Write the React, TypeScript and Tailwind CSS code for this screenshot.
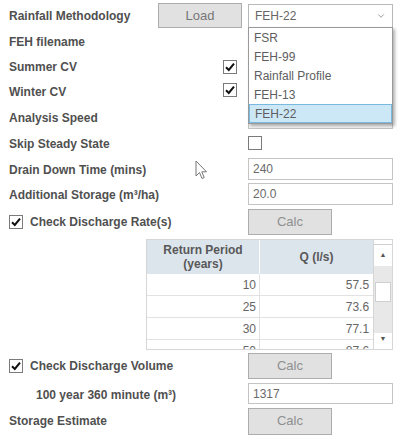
import { ChevronDown } from "lucide-react"

const labelCls = "text-[12px] font-bold text-[#505050] whitespace-nowrap"

function Check({ checked }: { checked?: boolean }) {
  return (
    <div className="w-[14px] h-[14px] border border-[#7a7a7a] bg-white flex items-center justify-center shrink-0">
      {checked && (
        <svg width="12" height="12" viewBox="0 0 12 12">
          <path d="M2 6.2 L4.8 9 L10 2.6" fill="none" stroke="#111" strokeWidth="2" />
        </svg>
      )}
    </div>
  )
}

function Btn({ label, w = "w-[84px]", h = "h-[26px]", tone = "text-[#8f8f8f]" }: { label: string; w?: string; h?: string; tone?: string }) {
  return (
    <div className={`${w} ${h} bg-[#e1e1e1] border border-[#adadad] flex items-center justify-center text-[13px] ${tone}`}>
      {label}
    </div>
  )
}

function Input({ value, h = "h-[22px]" }: { value: string; h?: string }) {
  return (
    <div className={`w-[145px] ${h} border border-[#c4c4c4] bg-white flex items-center pl-[4px] text-[12px] text-[#6a6a6a]`}>
      {value}
    </div>
  )
}

const rows = [
  ["10", "57.5"],
  ["25", "73.6"],
  ["30", "77.1"],
  ["50", "87.6"],
]

export default function App() {
  return (
    <div className="relative w-[399px] h-[446px] bg-white font-['Liberation_Sans',Arial,sans-serif] overflow-hidden">
      <div className="flex flex-col pt-[3px]">
        {/* rainfall methodology */}
        <div className="flex items-center h-[25px]">
          <div className="flex items-center w-[248px] pl-[9px]">
            <span className={labelCls}>Rainfall Methodology</span>
            <div className="ml-auto mr-[6px]">
              <Btn label="Load" h="h-[25px]" tone="text-[#777]" />
            </div>
          </div>
          <div className="w-[145px] h-[24px] border border-[#b8b8b8] bg-white flex items-center pl-[6px] pr-[6px] text-[12px] text-[#666]">
            <span>FEH-22</span>
            <ChevronDown className="ml-auto text-[#888]" size={10} strokeWidth={2} />
          </div>
        </div>

        <div className="flex items-center h-[26px]">
          <div className="w-[248px] pl-[9px]">
            <span className={labelCls}>FEH filename</span>
          </div>
        </div>

        <div className="flex items-center h-[25px]">
          <div className="flex items-center w-[248px] pl-[9px]">
            <span className={labelCls}>Summer CV</span>
            <div className="ml-auto mr-[11px]">
              <Check checked />
            </div>
          </div>
        </div>

        <div className="flex items-center h-[25px]">
          <div className="flex items-center w-[248px] pl-[9px]">
            <span className={labelCls}>Winter CV</span>
            <div className="ml-auto mr-[11px] -mt-[3px]">
              <Check checked />
            </div>
          </div>
        </div>

        <div className="flex items-center h-[26px]">
          <div className="w-[248px] pl-[9px]">
            <span className={labelCls}>Analysis Speed</span>
          </div>
          <div className="w-[145px] h-[24px] border border-[#c4c4c4] bg-[#f4f4f4]" />
        </div>

        <div className="flex items-center h-[26px]">
          <div className="w-[248px] pl-[9px]">
            <span className={labelCls}>Skip Steady State</span>
          </div>
          <Check />
        </div>

        <div className="flex items-center h-[25px]">
          <div className="w-[248px] pl-[9px]">
            <span className={labelCls}>Drain Down Time (mins)</span>
          </div>
          <Input value="240" />
        </div>

        <div className="flex items-center h-[26px]">
          <div className="w-[248px] pl-[9px]">
            <span className={labelCls}>Additional Storage (m³/ha)</span>
          </div>
          <Input value="20.0" />
        </div>

        <div className="flex items-center h-[30px]">
          <div className="flex items-center gap-[7px] w-[248px] pl-[9px]">
            <Check checked />
            <span className={labelCls}>Check Discharge Rate(s)</span>
          </div>
          <Btn label="Calc" />
        </div>

        {/* return period table */}
        <div className="ml-[146px] mt-[2px] w-[247px] h-[111px] flex border border-[#d6d6d6] overflow-hidden">
          <div className="w-[227px] flex flex-col">
            <div className="flex h-[34px] shrink-0 bg-[#dde5ec]">
              <div className="w-[113px] flex items-center justify-center text-center leading-[14px] text-[12px] font-bold text-[#585858] border-r border-white">
                Return Period
                <br />
                (years)
              </div>
              <div className="flex-1 flex items-center justify-center text-[12px] font-bold text-[#585858]">Q (l/s)</div>
            </div>
            {rows.map(([p, q]) => (
              <div key={p} className="flex h-[22px] shrink-0 border-b border-[#e2e2e2] text-[12px] text-[#666]">
                <div className="w-[113px] flex items-center justify-end pr-[3px] border-r border-[#e2e2e2]">{p}</div>
                <div className="flex-1 flex items-center justify-end pr-[4px]">{q}</div>
              </div>
            ))}
          </div>
          <div className="w-[19px] flex flex-col border-l border-[#d6d6d6] bg-white">
            <div className="h-[5px] border-b border-[#cfcfcf]" />
            <div className="h-[21px] flex items-center justify-center text-[7px] text-[#555]">▲</div>
            <div className="flex-1 flex flex-col bg-[#e8e8e8]">
              <div className="h-[16px]" />
              <div className="h-[20px] mx-[1px] bg-white border border-[#cfcfcf]" />
            </div>
            <div className="h-[16px] flex items-start justify-center text-[7px] text-[#555] pt-[1px]">▼</div>
          </div>
        </div>

        <div className="flex items-center h-[28px] mt-[2px]">
          <div className="flex items-center gap-[7px] w-[248px] pl-[9px]">
            <Check checked />
            <span className={labelCls}>Check Discharge Volume</span>
          </div>
          <Btn label="Calc" />
        </div>

        <div className="flex items-center h-[27px]">
          <div className="w-[248px] pl-[36px]">
            <span className={labelCls}>100 year 360 minute (m³)</span>
          </div>
          <Input value="1317" h="h-[21px]" />
        </div>

        <div className="flex items-center h-[28px]">
          <div className="w-[248px] pl-[9px] -mt-[3px]">
            <span className={labelCls}>Storage Estimate</span>
          </div>
          <Btn label="Calc" h="h-[27px]" />
        </div>
      </div>

      {/* open dropdown list */}
      <div className="absolute left-[248px] top-[27px] w-[145px] h-[97px] bg-white border border-[#9a9a9a] shadow-[2px_2px_3px_rgba(0,0,0,0.3)] flex flex-col pt-[1px] text-[12px] text-[#5e5e5e]">
        {["FSR", "FEH-99", "Rainfall Profile", "FEH-13"].map((o) => (
          <div key={o} className="h-[19px] flex items-center pl-[5px]">
            {o}
          </div>
        ))}
        <div className="h-[19px] flex items-center pl-[5px] bg-[#cce7f6] border border-[#78b9df]">FEH-22</div>
      </div>

      {/* mouse pointer */}
      <svg className="absolute left-[195px] top-[160px]" width="13" height="20" viewBox="0 0 13 20">
        <path d="M1 1 L1 16 L4.5 12.5 L7 18.5 L9.2 17.5 L6.8 11.8 L11.5 11.8 Z" fill="white" stroke="#777" strokeWidth="1" strokeLinejoin="round" />
      </svg>
    </div>
  )
}
